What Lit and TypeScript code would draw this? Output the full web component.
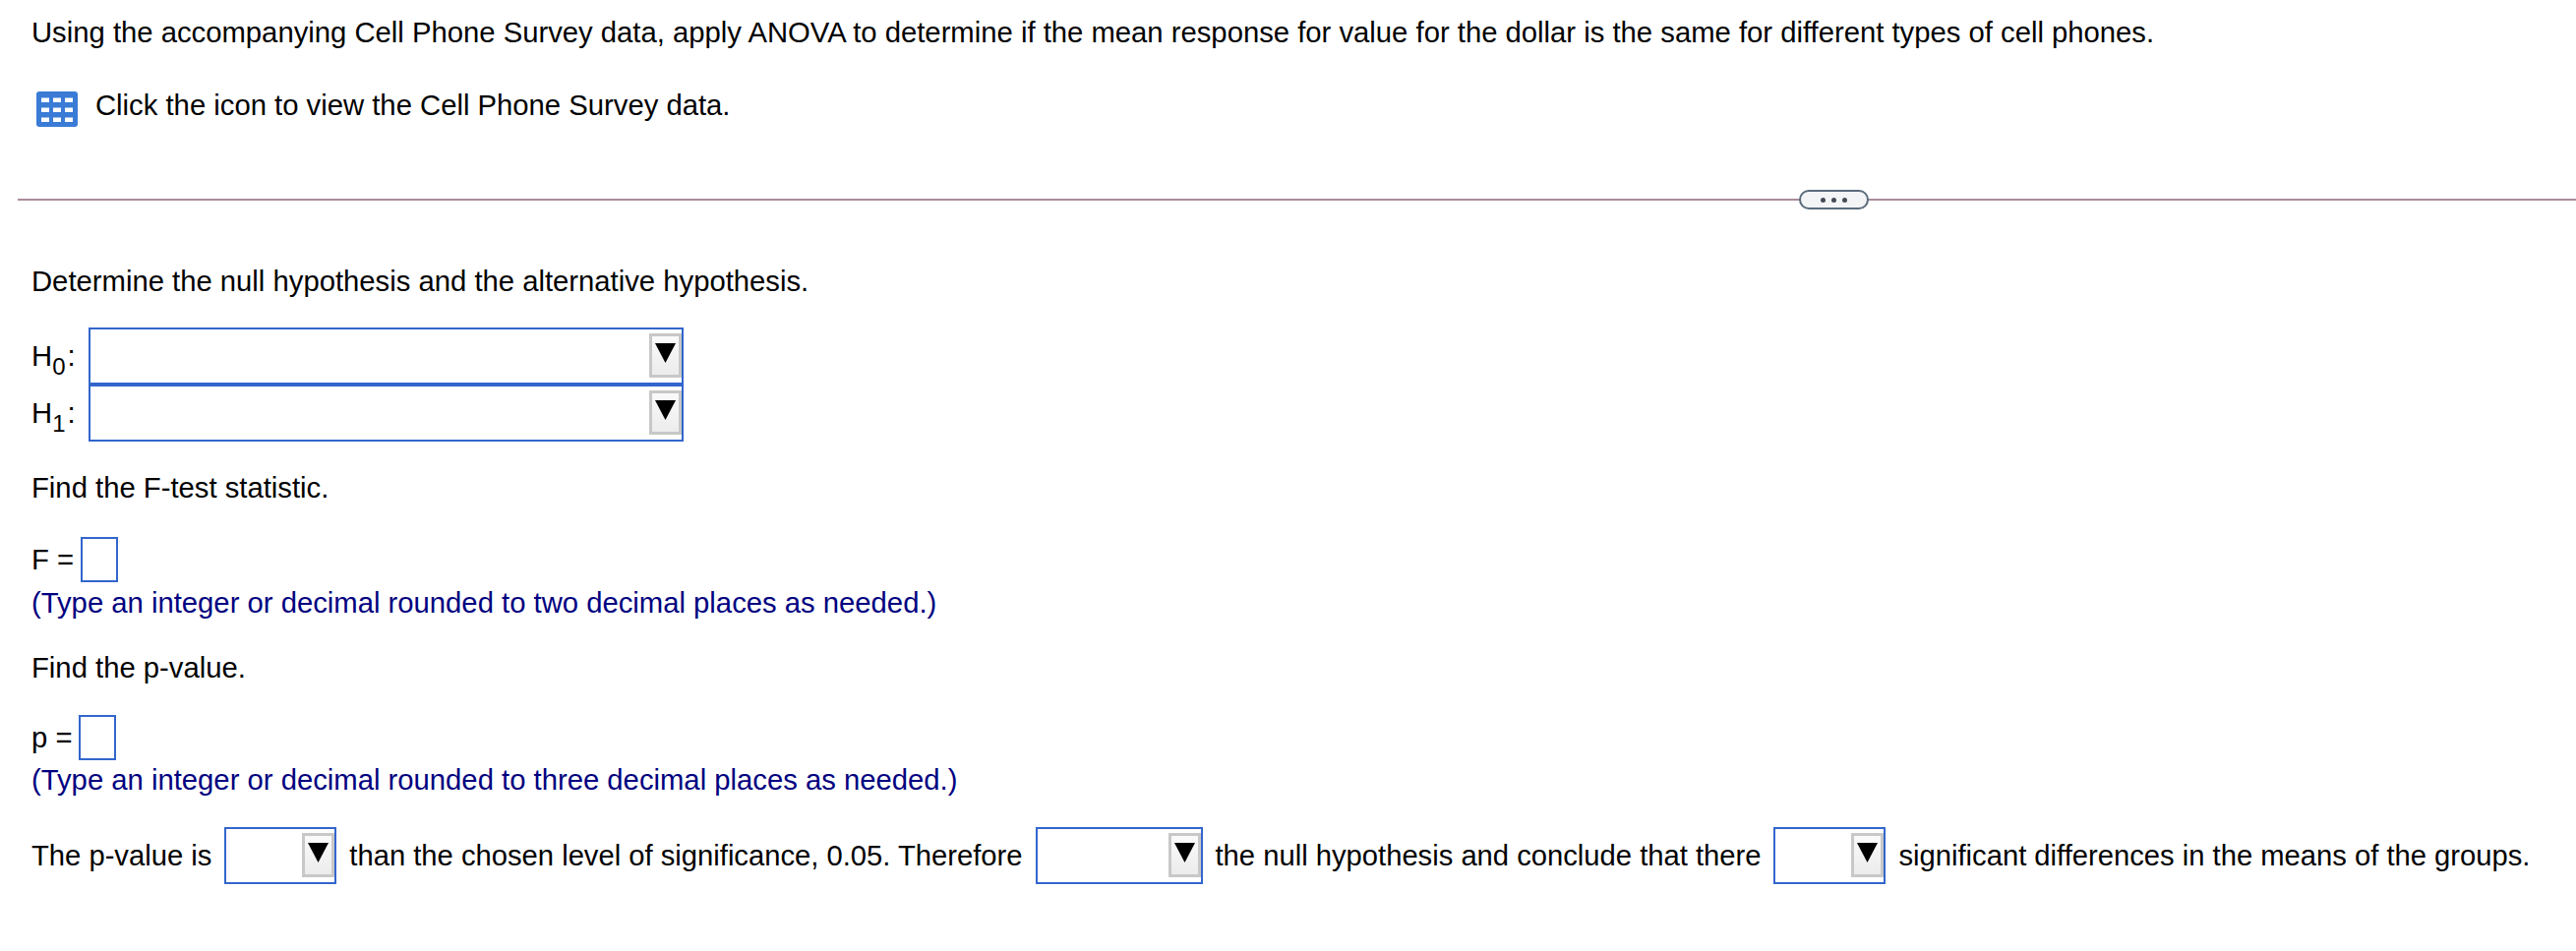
import { LitElement, css, html, svg } from 'lit'
import { customElement } from 'lit/decorators.js'

@customElement('drop-box')
export class DropBox extends LitElement {
	render() {
		return html`
		<div class="box">
			<div class="btn">
				<svg width="21" height="20" viewBox="0 0 21 20"><polygon points="0,0 21,0 10.5,20" fill="#000"></polygon></svg>
			</div>
		</div>
	`
	}

	static styles = css`
	:host {
		display: block;
	}
	.box {
		box-sizing: border-box;
		height: 58px;
		border: 2px solid #3366cc;
		background: #fff;
		display: flex;
		justify-content: flex-end;
		align-items: flex-start;
		padding: 4px 0 0 0;
	}
	.btn {
		box-sizing: border-box;
		width: 33px;
		height: 45px;
		border: 3px solid #c8c8c8;
		background: linear-gradient(#fafafa, #ececec);
		display: flex;
		justify-content: center;
		padding-top: 7px;
	}
	`
}

const COLS = [5, 17, 29]
const ROWS = [6.5, 16.5, 26.5]

@customElement('app-root')
export class AppRoot extends LitElement {
	render() {
		return html`
		<div class="page">
			<div class="q first">Using the accompanying Cell Phone Survey data, apply ANOVA to determine if the mean response for value for the dollar is the same for different types of cell phones.</div>
			<div class="q data">
				<svg class="grid" width="42" height="36" viewBox="0 0 42 36">
					<defs><filter id="soft" x="-30%" y="-30%" width="160%" height="160%"><feGaussianBlur stdDeviation="0.7"></feGaussianBlur></filter></defs>
					<rect width="42" height="36" rx="3" fill="#3a7bd6"></rect>
					${ROWS.map((y) => COLS.map((x) => svg`<rect x=${x} y=${y} width="8" height="4.5" fill="#fff" filter="url(#soft)"></rect>`))}
				</svg>
				<span>Click the icon to view the Cell Phone Survey data.</span>
			</div>
			<div class="rule"><div class="pill"><i></i><i></i><i></i></div></div>
			<div class="q det">Determine the null hypothesis and the alternative hypothesis.</div>
			<div class="hyps">
				<div class="q hyp">
					<span class="h">H<sub>0</sub>:</span><drop-box class="wide"></drop-box>
				</div>
				<div class="q hyp">
					<span class="h">H<sub>1</sub>:</span><drop-box class="wide"></drop-box>
				</div>
			</div>
			<div class="q ftitle">Find the F-test statistic.</div>
			<div class="q ans f"><span>F =</span><div class="input"></div></div>
			<div class="q hint h-f">(Type an integer or decimal rounded to two decimal places as needed.)</div>
			<div class="q ptitle">Find the p-value.</div>
			<div class="q ans p"><span>p =</span><div class="input"></div></div>
			<div class="q hint h-p">(Type an integer or decimal rounded to three decimal places as needed.)</div>
			<div class="q last">
				<span>The p-value is</span>
				<drop-box class="s1"></drop-box>
				<span>than the chosen level of significance, 0.05. Therefore</span>
				<drop-box class="s2"></drop-box>
				<span>the null hypothesis and conclude that there</span>
				<drop-box class="s3"></drop-box>
				<span>significant differences in the means of the groups.</span>
			</div>
		</div>
	`
	}

	static styles = css`
	:host {
		display: block;
		background: #fff;
		color: #000;
		font-family: "Liberation Sans", Arial, sans-serif;
		font-size: 29.25px;
		line-height: 32px;
	}
	.page {
		padding: 17px 0 68px 18px;
	}
	.q {
		padding-left: 14px;
		white-space: nowrap;
	}
	.data {
		display: flex;
		align-items: flex-start;
		gap: 18px;
		margin-top: 42px;
		padding-left: 19px;
	}
	.grid {
		margin-top: 2px;
		flex: none;
	}
	.rule {
		position: relative;
		height: 2px;
		margin-top: 73px;
		background: #a98c9b;
	}
	.pill {
		position: absolute;
		left: 1811px;
		top: -9px;
		box-sizing: border-box;
		width: 71px;
		height: 20px;
		border: 2px solid #5a6b7b;
		border-radius: 10px;
		background: #f3f4f6;
		display: flex;
		justify-content: center;
		align-items: center;
		gap: 6px;
	}
	.pill i {
		width: 5px;
		height: 5px;
		border-radius: 50%;
		background: #444b55;
	}
	.det {
		margin-top: 66px;
	}
	.hyps {
		margin-top: 31px;
	}
	.hyp {
		display: flex;
		align-items: center;
	}
	.h {
		width: 58px;
		flex: none;
	}
	.h sub {
		font-size: 24px;
		line-height: 0;
		vertical-align: -9px;
		margin-right: 2px;
	}
	.wide {
		width: 605px;
	}
	.ftitle {
		margin-top: 31px;
	}
	.ans {
		display: flex;
		align-items: center;
		gap: 7px;
	}
	.ans.f {
		margin-top: 34px;
	}
	.ans.p {
		margin-top: 32px;
	}
	.input {
		box-sizing: border-box;
		width: 38px;
		height: 46px;
		border: 2px solid #3366cc;
	}
	.hint {
		color: #000080;
	}
	.h-f {
		margin-top: 5px;
	}
	.h-p {
		margin-top: 4px;
	}
	.ptitle {
		margin-top: 34px;
	}
	.last {
		display: flex;
		align-items: center;
		gap: 13px;
		margin-top: 32px;
		font-size: 29.2px;
	}
	.s1, .s3 {
		width: 114px;
	}
	.s2 {
		width: 170px;
	}
	`
}

declare global {
	interface HTMLElementTagNameMap {
		'app-root': AppRoot
		'drop-box': DropBox
	}
}
